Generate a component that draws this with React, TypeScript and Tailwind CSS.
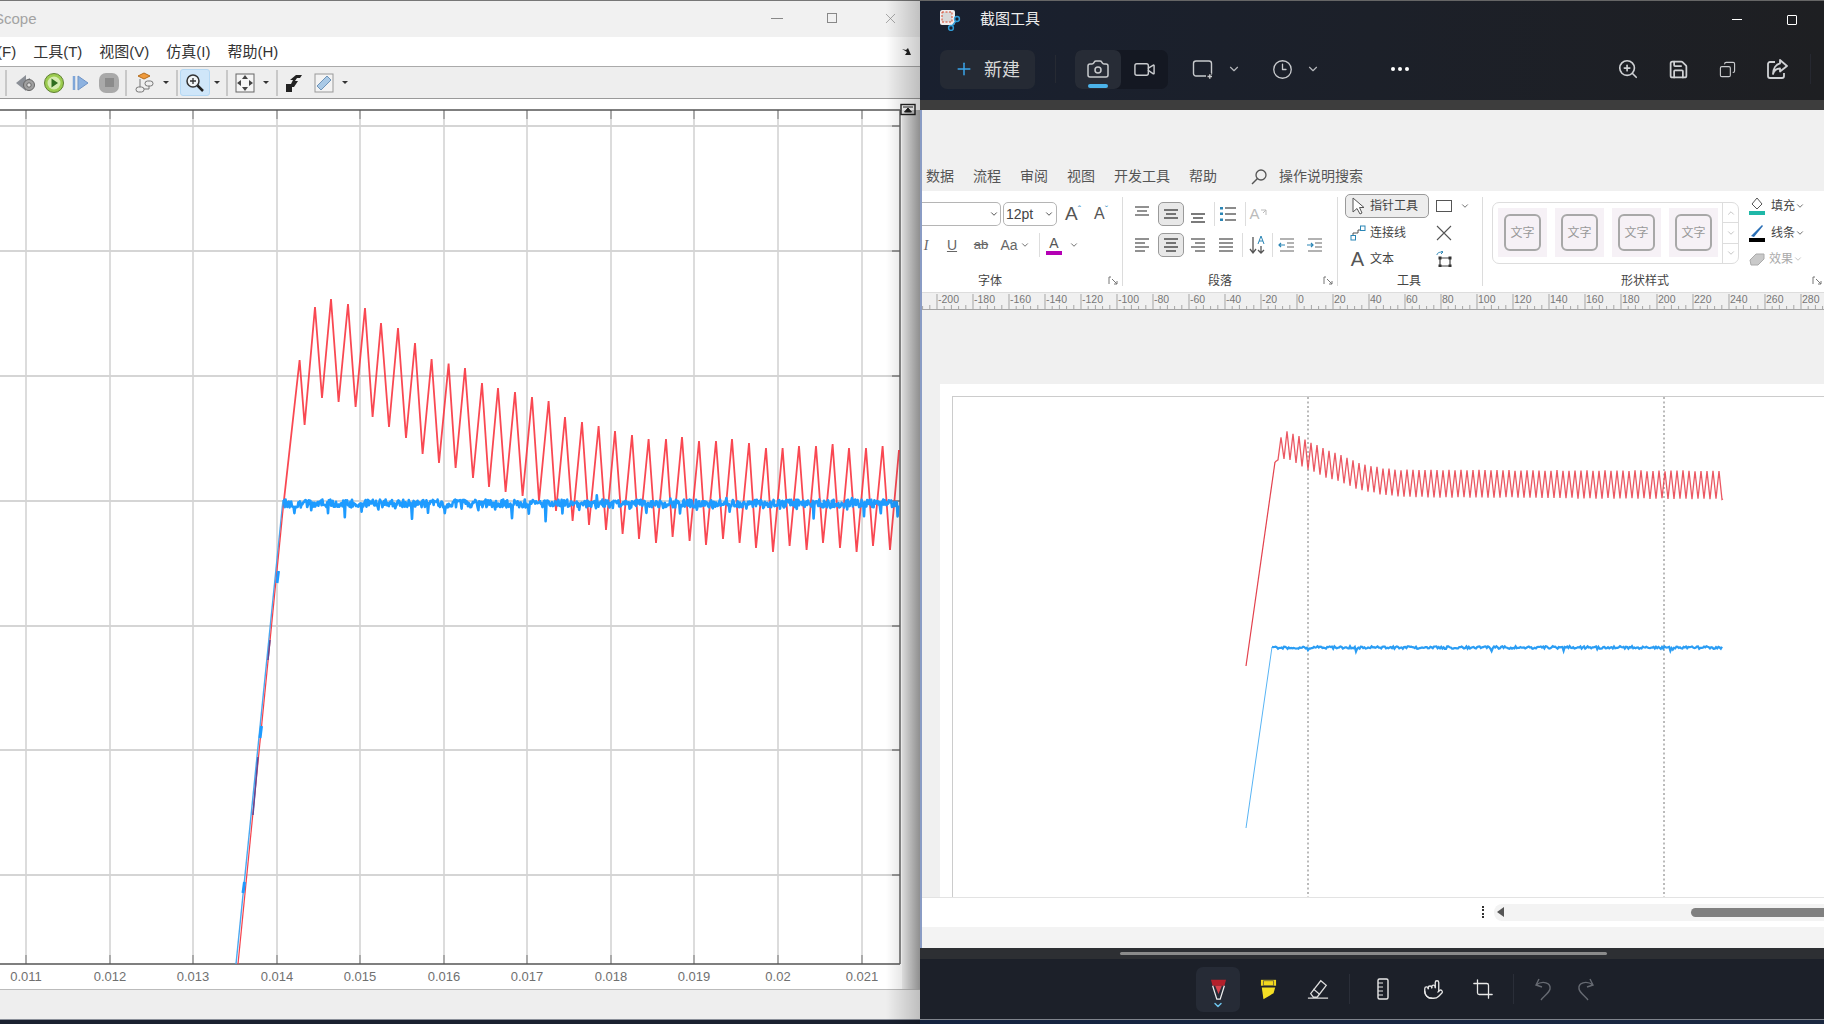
import type { ReactNode } from 'react';
import { Camera, ChevronDown, Clock3, Copy, Crop, Plus, Pointer, Save, Search, Video, X, ZoomIn } from 'lucide-react';

// traces, page coordinates
const redPeaks = [
  [284, 500], [299.6, 360], [304.6, 425], [315, 307], [322, 398], [331, 299], [338.6, 402], [348, 304], [355.6, 407],
  [365, 308], [372.6, 417], [381, 323], [389, 427], [398, 328], [406, 438], [415, 343], [422.6, 454], [431.6, 359], [439, 463],
  [448.6, 363.6], [455.6, 468], [465, 368], [473, 478], [482, 383], [489, 487], [498, 388], [505.6, 492], [515, 392], [522.6, 496],
  [532, 397], [539, 501], [548.6, 401], [556, 511], [565, 417], [572.6, 521], [582, 422], [589, 525], [598.6, 426], [606, 530],
  [615, 431], [622.6, 534], [632, 435], [639, 539], [648.6, 439], [656, 543], [666, 439], [672.6, 537], [682, 437], [689.6, 541],
  [699, 441], [706, 545], [716, 441], [723, 539], [732, 439], [739.6, 543], [749, 443], [756, 548], [766, 448], [773, 552],
  [782.6, 448], [789.6, 546], [799, 446], [806.6, 550], [816, 446], [823, 543], [832.6, 444], [840, 548], [849, 448], [856.6, 552],
  [866, 448], [873, 546], [882.6, 446], [890, 550], [899, 450],
];

let seed = 12345;
const rnd = () => {
  seed = (seed * 16807) % 2147483647;
  return seed / 2147483647;
};

function bluePlateau() {
  const pts = ['283,500'];
  let nextSpike = 294;
  for (let x = 284; x < 899; x += 0.8) {
    let y = 503.5 + (rnd() - 0.5) * 8;
    if (x >= nextSpike) {
      y = 505 + 3 + rnd() * rnd() * 16;
      nextSpike += 16.75;
    }
    if (rnd() > 0.993) y -= 7;
    pts.push(`${x.toFixed(1)},${y.toFixed(1)}`);
  }
  return pts.join(' ');
}

function interp(tbl: number[][], x: number) {
  for (let i = 1; i < tbl.length; i++) {
    if (x <= tbl[i][0]) {
      const [x0, y0] = tbl[i - 1];
      const [x1, y1] = tbl[i];
      return y0 + ((y1 - y0) * (x - x0)) / (x1 - x0);
    }
  }
  return tbl[tbl.length - 1][1];
}

const topEnv = [[1270, 450], [1287, 431], [1300, 437], [1320, 447], [1340, 455], [1360, 463], [1380, 468], [1400, 470], [1723, 471]];
const lowEnv = [[1270, 462], [1287, 458], [1300, 465], [1320, 475], [1340, 482], [1360, 490], [1380, 494], [1400, 497], [1723, 499]];

function smallRed() {
  const pts = ['1275,462'];
  for (let x = 1278; x < 1723; x += 3) {
    const up = Math.round((x - 1278) / 3) % 2 === 1;
    pts.push(`${x},${(interp(up ? topEnv : lowEnv, x) + (rnd() - 0.5)).toFixed(1)}`);
  }
  pts.push('1723,499');
  return pts.join(' ');
}

function smallBlue() {
  const pts: string[] = [];
  for (let x = 1272; x < 1723; x += 1.2) {
    let y = 647.5 + (rnd() - 0.5) * 2.6;
    if (rnd() > 0.97) y += 3;
    pts.push(`${x.toFixed(1)},${y.toFixed(1)}`);
  }
  return pts.join(' ');
}

const blueLine = bluePlateau();
const smallRedLine = smallRed();
const smallBlueLine = smallBlue();

const ticks = [26, 110, 193, 277, 360, 444, 527, 611, 694, 778, 862];
const tickLabels = ['0.011', '0.012', '0.013', '0.014', '0.015', '0.016', '0.017', '0.018', '0.019', '0.02', '0.021'];
const hLines = [126, 251, 376, 501, 626, 750, 875];
const rulerMarks = Array.from({ length: 26 }, (_, i) => -200 + i * 20 - 20);

function Slot({ className, children }: { className: string; children?: ReactNode }) {
  return <div className={`flex items-center justify-center shrink-0 ${className}`}>{children}</div>;
}

function Ico({ w = 22, h = 22, box, children }: { w?: number; h?: number; box?: string; children: ReactNode }) {
  return (
    <svg width={w} height={h} viewBox={box ?? `0 0 ${w} ${h}`} fill="none">
      {children}
    </svg>
  );
}

function Caret() {
  return <div className="w-0 h-0 border-x-[3px] border-x-transparent border-t-[3px] border-t-[#333]" />;
}

function ToolSep({ className }: { className: string }) {
  return <div className={`w-[2px] h-[26px] bg-[#c8c8c8] shrink-0 ${className}`} />;
}

function Lines({ rows, color = '#555' }: { rows: number[][]; color?: string }) {
  return (
    <Ico w={18} h={18}>
      {rows.map((r, i) => (
        <path key={i} d={`M${r[0]} ${r[2]}H${r[1]}`} stroke={color} strokeWidth="1.3" />
      ))}
    </Ico>
  );
}

function Launcher() {
  return (
    <Ico w={10} h={10}>
      <path d="M1 1V8M3 1H1M4 3L9 8M9 5V8H6" stroke="#777" strokeWidth="1" />
    </Ico>
  );
}

function Divider() {
  return <div className="w-px bg-[#dcdcdc] my-[6px] shrink-0" />;
}

function StyleTile() {
  return (
    <div className="w-[49px] h-[49px] bg-[#f6f1f6] flex items-center justify-center shrink-0">
      <div className="w-[37px] h-[37px] border-2 border-[#a8a8a8] rounded-[6px] flex items-center justify-center text-[12px] text-[#999]">文字</div>
    </div>
  );
}

function ScopeWindow() {
  return (
    <div className="relative w-[920px] h-full flex flex-col shrink-0 bg-white overflow-hidden">
      <div className="h-[37px] bg-[#f1f1f1] border-t border-[#777] flex items-center shrink-0">
        <span className="text-[15px] text-[#a3a3a3] -ml-[6px]">Scope</span>
        <div className="flex items-center -mt-[2px]">
          <Slot className="w-[20px] h-[20px] ml-[730px]"><div className="w-[12px] h-px bg-[#888]" /></Slot>
          <Slot className="w-[20px] h-[20px] ml-[35px]"><div className="w-[10px] h-[10px] border border-[#888]" /></Slot>
          <Slot className="w-[20px] h-[20px] ml-[39px]"><X size={17} strokeWidth={1} color="#888" /></Slot>
        </div>
      </div>
      <div className="h-[30px] bg-white border-b border-[#aaa] flex items-center gap-[17px] text-[15px] text-[#333] pt-[1px] shrink-0 -ml-[3px]">
        <span>(F)</span>
        <span>工具(T)</span>
        <span>视图(V)</span>
        <span>仿真(I)</span>
        <span>帮助(H)</span>
        <Slot className="w-[14px] h-[14px] ml-[605px]">
          <Ico w={10} h={8}><path d="M0 1L4 2L6 0L9 7H3L5 4Z" fill="#222" /></Ico>
        </Slot>
      </div>
      <div className="h-[32px] bg-[#eee] border-b border-[#999] flex items-center shrink-0">
        <ToolSep className="ml-[5px]" />
        <Slot className="w-[28px] h-[28px] ml-[5px]">
          <Ico w={22} h={22}>
            <path d="M1 11L11 3V8L15 6V16L11 14V19Z" fill="#8b8f96" />
            <circle cx="14" cy="13" r="5.5" fill="#a0a0a0" stroke="#666" />
            <circle cx="14" cy="13" r="2.2" fill="#ddd" stroke="#666" />
          </Ico>
        </Slot>
        <Slot className="w-[27px] h-[28px]">
          <Ico w={22} h={22}>
            <circle cx="11" cy="11" r="9.5" fill="#9ccc4f" stroke="#5f7f33" />
            <circle cx="11" cy="11" r="6.5" fill="#d6ecb0" />
            <path d="M8.5 6.5L15 11L8.5 15.5Z" fill="#2f6e1f" />
          </Ico>
        </Slot>
        <Slot className="w-[28px] h-[28px]">
          <Ico w={18} h={18}>
            <path d="M2 2V16" stroke="#7fa6d8" strokeWidth="2.5" />
            <path d="M6 2L16 9L6 16Z" fill="#8db2e0" stroke="#6e93c6" />
          </Ico>
        </Slot>
        <Slot className="w-[28px] h-[28px]">
          <div className="w-[20px] h-[20px] rounded-[7px] bg-[#a9a9a9] flex items-center justify-center">
            <div className="w-[9px] h-[9px] bg-[#8b8b8b]" />
          </div>
        </Slot>
        <ToolSep className="ml-[2px]" />
        <Slot className="w-[26px] h-[28px] ml-[5px]">
          <Ico w={20} h={22}>
            <path d="M3 4L9 1L15 4L9 7Z" fill="#ef9a3c" stroke="#b56d1c" />
            <rect x="10" y="9" width="8" height="5" rx="2.5" fill="#eee" stroke="#777" />
            <rect x="1" y="15" width="8" height="5" rx="2.5" fill="#eee" stroke="#777" />
            <path d="M5 7V15M14 14V17H9" stroke="#777" />
          </Ico>
        </Slot>
        <Slot className="w-[16px] h-[28px]"><Caret /></Slot>
        <ToolSep className="ml-[2px]" />
        <Slot className="w-[30px] h-[27px] ml-[2px] bg-[#cfe6f9] border border-[#b5d8f3] rounded-[3px]">
          <Ico w={20} h={20}>
            <circle cx="8" cy="8" r="6" fill="#f2f6f8" stroke="#333" strokeWidth="1.5" />
            <path d="M5 8H11M8 5V11" stroke="#333" strokeWidth="1.3" />
            <path d="M12.5 12.5L18 18" stroke="#222" strokeWidth="2.5" />
          </Ico>
        </Slot>
        <Slot className="w-[13px] h-[28px]"><Caret /></Slot>
        <ToolSep className="ml-[3px]" />
        <Slot className="w-[26px] h-[28px] ml-[4px]">
          <Ico w={20} h={20}>
            <rect x="1" y="1" width="18" height="18" fill="#f5f5f5" stroke="#666" />
            <path d="M10 2L7 6H13ZM10 18L7 14H13ZM2 10L6 7V13ZM18 10L14 7V13Z" fill="#444" />
          </Ico>
        </Slot>
        <Slot className="w-[16px] h-[28px]"><Caret /></Slot>
        <ToolSep className="ml-[2px]" />
        <Slot className="w-[26px] h-[28px] ml-[3px]">
          <Ico w={18} h={20}>
            <path d="M1 19V11H6L8 7H5L11 2H17L15 5H12L10 8H13L9 14H7V19Z" fill="#222" />
          </Ico>
        </Slot>
        <Slot className="w-[26px] h-[28px] ml-[4px]">
          <Ico w={20} h={20}>
            <rect x="1" y="1" width="18" height="18" fill="#f3f3f3" stroke="#999" />
            <path d="M3 13L13 3L17 7L7 17Z" fill="#a9c9e6" stroke="#6f94b8" />
          </Ico>
        </Slot>
        <Slot className="w-[16px] h-[28px]"><Caret /></Slot>
      </div>
      <svg className="flex-1 min-h-0 block" viewBox="0 99 920 890" width="920" height="890" fill="none">
        {hLines.map(y => <path key={y} d={`M0 ${y}H900`} stroke="#ababab" />)}
        {ticks.map(x => (
          <g key={x}>
            <path d={`M${x} 110V964`} stroke="#d4d4d4" strokeWidth="1.6" />
            <path d={`M${x} 110V119M${x} 955V964`} stroke="#8a8a8a" strokeWidth="1.2" />
          </g>
        ))}
        {hLines.map(y => <path key={y} d={`M892 ${y}H900`} stroke="#555" />)}
        <path d="M0 110H900M0 964H900" stroke="#555" strokeWidth="1.3" />
        <path d="M900 110V964" stroke="#666" strokeWidth="1.5" />
        <path d="M236 964L283 500" stroke="#4aa8f0" strokeWidth="1.4" />
        <path d="M238 964L284 500" stroke="#f5414b" strokeWidth="1.2" />
        <path d="M253 815L258 757M268 660L270 640" stroke="#5a4a9a" strokeWidth="1.5" />
        <path d="M243 893L244.5 882M260 738L261.5 726M277 583L278.5 571" stroke="#1e9bff" strokeWidth="3" />
        <polyline points={redPeaks.map(p => p.join(',')).join(' ')} stroke="#f8343f" strokeWidth="1.8" strokeLinejoin="miter" opacity="0.9" />
        <polyline points={blueLine} stroke="#1e9bff" strokeWidth="2.6" strokeLinejoin="round" />
        <rect x="901" y="104.5" width="14" height="10" fill="#fff" stroke="#222" strokeWidth="1.4" />
        <path d="M903 107H913M908 108L904.5 112H911.5Z" stroke="#222" fill="#222" />
        {ticks.map((x, i) => (
          <text key={x} x={x} y="981" textAnchor="middle" fontSize="13" fill="#707070" fontFamily="Liberation Sans">{tickLabels[i]}</text>
        ))}
      </svg>
      <div className="h-[30px] bg-[#eee] border-t border-[#bbb] shrink-0" />
      <div className="h-[5px] bg-[#1a2130] border-t border-[#8a8f99] shrink-0" />
      <div className="absolute right-0 top-0 bottom-0 w-[34px] bg-linear-to-r from-transparent to-black/20 pointer-events-none" />
      <div className="absolute right-0 top-[110px] bottom-[35px] w-[18px] bg-linear-to-r from-black/5 to-black/30 pointer-events-none" />
    </div>
  );
}

function Ribbon() {
  return (
    <div className="h-[101px] bg-white flex text-[12px] text-[#444] shrink-0">
      {/* font */}
      <div className="w-[200px] pt-[11px] shrink-0">
        <div className="flex h-[24px]">
          <div className="w-[79px] border border-l-0 border-[#b5b5b5] rounded-r-[5px] flex items-center justify-end pr-[1px]">
            <ChevronDown size={10} color="#333" strokeWidth={2} />
          </div>
          <div className="w-[54px] ml-[2px] border border-[#b5b5b5] rounded-[5px] flex items-center justify-between px-[2px] text-[14px] text-[#444]">
            <span>12pt</span>
            <ChevronDown size={10} color="#333" strokeWidth={2} />
          </div>
          <Slot className="w-[22px] ml-[5px]"><span className="text-[19px] text-[#555]">A</span><span className="text-[10px] text-[#3a8fc4] -mt-[8px]">ˆ</span></Slot>
          <Slot className="w-[24px] ml-[5px]"><span className="text-[16px] text-[#555]">A</span><span className="text-[10px] text-[#3a8fc4] -mt-[8px]">ˇ</span></Slot>
        </div>
        <div className="flex h-[24px] mt-[7px] items-center text-[#666]">
          <Slot className="w-[8px]"><span className="italic text-[14px] [font-family:'Liberation_Serif',serif]">I</span></Slot>
          <Slot className="w-[20px] ml-[12px]"><span className="underline text-[14px]">U</span></Slot>
          <Slot className="w-[20px] ml-[9px]"><span className="line-through text-[13px]">ab</span></Slot>
          <Slot className="w-[22px] ml-[7px]"><span className="text-[14px]">Aa</span></Slot>
          <Slot className="w-[10px]"><ChevronDown size={10} color="#555" /></Slot>
          <div className="w-px h-[24px] bg-[#ddd] ml-[9px]" />
          <Slot className="w-[20px] ml-[4px] flex-col">
            <span className="text-[14px] leading-[15px] text-[#555]">A</span>
            <div className="w-[16px] h-[4px] bg-[#b400b4]" />
          </Slot>
          <Slot className="w-[10px] ml-[5px]"><ChevronDown size={10} color="#555" /></Slot>
        </div>
        <div className="flex h-[18px] mt-[15px] items-center">
          <div className="w-[136px] text-center">字体</div>
          <Slot className="w-[10px] ml-[50px]"><Launcher /></Slot>
        </div>
      </div>
      <Divider />
      {/* paragraph */}
      <div className="w-[214px] pt-[11px] shrink-0">
        <div className="flex h-[24px] items-center">
          <Slot className="w-[24px] ml-[7px]"><Lines rows={[[2, 16, 2], [4, 14, 6], [2, 16, 10]]} /></Slot>
          <Slot className="w-[26px] h-[24px] ml-[4px] bg-[#e8e8e8] border border-[#9a9a9a] rounded-[5px]"><Lines rows={[[2, 16, 5], [4, 14, 9], [2, 16, 13]]} color="#333" /></Slot>
          <Slot className="w-[24px] ml-[2px]"><Lines rows={[[2, 16, 9], [4, 14, 13], [2, 16, 17]]} color="#333" /></Slot>
          <div className="w-px h-[24px] bg-[#ddd] ml-[4px]" />
          <Slot className="w-[20px] ml-[3px]">
            <Ico w={18} h={18}>
              <path d="M6 3H17M6 9H17M6 15H17" stroke="#666" strokeWidth="1.3" />
              <path d="M1 2H4V4.5H1ZM1 7.5H4V10H1ZM1 13.5H4V16H1Z" fill="#2a85b5" />
            </Ico>
          </Slot>
          <div className="w-px h-[24px] bg-[#ddd] ml-[7px]" />
          <Slot className="w-[20px] ml-[2px]">
            <span className="text-[15px] text-[#bbb]">A</span>
            <Ico w={7} h={12}><path d="M1 2H6V7M6 2L3 5" stroke="#bbb" /></Ico>
          </Slot>
        </div>
        <div className="flex h-[24px] mt-[7px] items-center">
          <Slot className="w-[24px] ml-[7px]"><Lines rows={[[2, 16, 3], [2, 12, 7], [2, 16, 11], [2, 12, 15]]} /></Slot>
          <Slot className="w-[26px] h-[24px] ml-[4px] bg-[#e8e8e8] border border-[#9a9a9a] rounded-[5px]"><Lines rows={[[2, 16, 3], [4, 14, 7], [2, 16, 11], [4, 14, 15]]} color="#333" /></Slot>
          <Slot className="w-[24px] ml-[2px]"><Lines rows={[[2, 16, 3], [6, 16, 7], [2, 16, 11], [6, 16, 15]]} /></Slot>
          <Slot className="w-[24px] ml-[4px]"><Lines rows={[[2, 16, 3], [2, 16, 7], [2, 16, 11], [2, 16, 15]]} /></Slot>
          <div className="w-px h-[24px] bg-[#ddd] ml-[4px]" />
          <Slot className="w-[20px] ml-[4px]">
            <Ico w={18} h={20}>
              <path d="M5 2V17M2 14L5 18L8 14M13 11V17M10 15L13 18L16 15" stroke="#555" strokeWidth="1.3" />
              <path d="M10 9L13 1L16 9M11 6H15" stroke="#2a85b5" />
            </Ico>
          </Slot>
          <div className="w-px h-[24px] bg-[#ddd] ml-[5px]" />
          <Slot className="w-[24px] ml-[2px]">
            <Ico w={18} h={18}>
              <path d="M2 3H16M9 7H16M9 11H16M2 15H16" stroke="#666" strokeWidth="1.2" />
              <path d="M7 9H1M3 7L1 9L3 11" stroke="#2a85b5" strokeWidth="1.2" />
            </Ico>
          </Slot>
          <Slot className="w-[24px] ml-[4px]">
            <Ico w={18} h={18}>
              <path d="M2 3H16M9 7H16M9 11H16M2 15H16" stroke="#666" strokeWidth="1.2" />
              <path d="M1 9H7M5 7L7 9L5 11" stroke="#2a85b5" strokeWidth="1.2" />
            </Ico>
          </Slot>
        </div>
        <div className="flex h-[18px] mt-[15px] items-center">
          <div className="w-[194px] text-center">段落</div>
          <Slot className="w-[10px] ml-[6px]"><Launcher /></Slot>
        </div>
      </div>
      <Divider />
      {/* tools */}
      <div className="w-[144px] pt-[3px] shrink-0">
        <div className="flex h-[24px] items-center">
          <div className="w-[84px] h-[24px] ml-[7px] bg-[#ededed] border border-[#9a9a9a] rounded-[5px] flex items-center">
            <Slot className="w-[24px]">
              <Ico w={14} h={18}><path d="M2 1V15L6 11.5L9 17L11 16L8.5 10.5H13Z" fill="#fff" stroke="#555" /></Ico>
            </Slot>
            <span>指针工具</span>
          </div>
          <Slot className="w-[16px] ml-[7px]"><div className="w-[16px] h-[12px] border border-[#555]" /></Slot>
          <Slot className="w-[10px] ml-[8px]"><ChevronDown size={10} color="#555" /></Slot>
        </div>
        <div className="flex h-[24px] mt-[3px] items-center">
          <div className="w-[84px] ml-[7px] flex items-center">
            <Slot className="w-[25px]">
              <Ico w={16} h={16}>
                <path d="M3 11V8H8V5H11" stroke="#555" />
                <rect x="1" y="10.5" width="4.5" height="4.5" fill="#fff" stroke="#2a85b5" />
                <rect x="10.5" y="1" width="4.5" height="4.5" fill="#fff" stroke="#2a85b5" />
              </Ico>
            </Slot>
            <span>连接线</span>
          </div>
          <Slot className="w-[16px] ml-[7px]">
            <Ico w={16} h={16}><path d="M1 1L15 15M15 1L1 15" stroke="#555" strokeWidth="1.1" /></Ico>
          </Slot>
        </div>
        <div className="flex h-[24px] mt-[2px] items-center">
          <div className="w-[84px] ml-[7px] flex items-center">
            <Slot className="w-[25px]"><span className="text-[20px] text-[#555]">A</span></Slot>
            <span>文本</span>
          </div>
          <Slot className="w-[16px] ml-[7px]">
            <Ico w={16} h={16}>
              <path d="M4 7H14V15H4Z" stroke="#444" strokeWidth="1.2" />
              <path d="M2.5 5.5H5.5V8.5H2.5ZM12.5 5.5H15.5V8.5H12.5ZM2.5 13.5H5.5V16H2.5ZM12.5 13.5H15.5V16H12.5Z" fill="#333" />
              <path d="M1 4C1 2 3 1 7 1M5 0L7 1L5 3" stroke="#2a85b5" />
            </Ico>
          </Slot>
        </div>
        <div className="w-[142px] h-[18px] mt-[1px] flex items-center justify-center">工具</div>
      </div>
      <Divider />
      {/* shape styles */}
      <div className="flex-1 min-w-0">
        <div className="flex h-[81px]">
          <div className="w-[247px] h-[62px] ml-[9px] mt-[11px] border border-[#ddd] rounded-[7px] flex shrink-0 overflow-hidden">
            <div className="flex gap-[8px] pl-[5px] py-[5px]">
              <StyleTile />
              <StyleTile />
              <StyleTile />
              <StyleTile />
            </div>
            <div className="w-[16px] ml-auto border-l border-[#ddd] flex flex-col">
              <Slot className="flex-1 border-b border-[#ddd]"><ChevronDown size={10} color="#bbb" className="rotate-180" /></Slot>
              <Slot className="flex-1 border-b border-[#ddd]"><ChevronDown size={10} color="#bbb" /></Slot>
              <Slot className="flex-1"><ChevronDown size={10} color="#bbb" /></Slot>
            </div>
          </div>
          <div className="ml-[9px] pt-[2px] flex flex-col">
            <div className="h-[26px] flex items-center">
              <Slot className="w-[18px]">
                <Ico w={18} h={20}>
                  <path d="M9 2L14 8L9 13L4 8Z" fill="#fff" stroke="#555" />
                  <rect x="1" y="15" width="16" height="4" fill="#1fb8a8" />
                </Ico>
              </Slot>
              <span className="ml-[5px]">填充</span>
              <ChevronDown size={10} color="#555" />
            </div>
            <div className="h-[27px] flex items-center">
              <Slot className="w-[18px]">
                <Ico w={18} h={20}>
                  <path d="M3 13L14 2L15 3L6 14Z" fill="#2a6fb5" />
                  <rect x="1" y="15" width="16" height="4" fill="#000" />
                </Ico>
              </Slot>
              <span className="ml-[5px]">线条</span>
              <ChevronDown size={10} color="#555" />
            </div>
            <div className="h-[26px] flex items-center text-[#aaa]">
              <Slot className="w-[18px]">
                <Ico w={18} h={16}>
                  <path d="M2 9L8 3H16V8L10 14H3Z" fill="#c9c9c9" stroke="#aaa" />
                </Ico>
              </Slot>
              <span className="ml-[3px]">效果</span>
              <ChevronDown size={10} color="#bbb" />
            </div>
          </div>
        </div>
        <div className="flex h-[18px] items-center">
          <div className="w-[324px] text-center">形状样式</div>
          <Slot className="w-[10px] ml-[5px]"><Launcher /></Slot>
        </div>
      </div>
    </div>
  );
}

function SnipWindow() {
  return (
    <div className="flex-1 h-full min-w-0 flex flex-col bg-[#1c2029] overflow-hidden">
      <div className="h-[100px] border-t border-[#666] bg-linear-to-r from-[#19202f] via-[#1c2029] via-50% to-[#1e1f22] shrink-0">
        <div className="h-[37px] flex items-center">
          <Slot className="w-[24px] h-[24px] ml-[18px]">
            <Ico w={22} h={22}>
              <rect x="1" y="1" width="15" height="15" rx="2" fill="#f0eeee" />
              <rect x="3" y="3" width="10" height="10" fill="#d8d8d8" stroke="#d9472b" strokeDasharray="2 1.5" />
              <circle cx="18" cy="10" r="2.4" stroke="#2f9bd6" strokeWidth="1.5" />
              <circle cx="12" cy="19" r="2.4" stroke="#2f9bd6" strokeWidth="1.5" />
              <path d="M13 17L17 12" stroke="#2f9bd6" strokeWidth="1.5" />
            </Ico>
          </Slot>
          <span className="text-[15px] text-[#eee] ml-[18px]">截图工具</span>
          <Slot className="w-[14px] h-[14px] ml-[690px]"><div className="w-[10px] h-px bg-white" /></Slot>
          <Slot className="w-[14px] h-[14px] ml-[41px]"><div className="w-[10px] h-[10px] border border-white rounded-[1px]" /></Slot>
        </div>
        <div className="h-[62px] flex items-center">
          <div className="w-[95px] h-[39px] ml-[20px] bg-[#252a34] rounded-[7px] flex items-center shrink-0">
            <Slot className="w-[20px] ml-[14px]"><Plus size={24} strokeWidth={1.8} color="#3aa5ea" /></Slot>
            <span className="text-[18px] text-[#d8d8d8] ml-[10px] pt-[3px]">新建</span>
          </div>
          <div className="w-px h-[28px] bg-[#262a33] ml-[20px]" />
          <div className="w-[93px] h-[39px] ml-[19px] bg-[#141822] rounded-[7px] flex shrink-0">
            <div className="relative w-[46px] h-full bg-[#272c36] rounded-[7px] flex items-center justify-center">
              <Camera size={24} strokeWidth={1.5} color="#c8cacd" />
              <div className="absolute bottom-[1px] left-[13px] w-[20px] h-[3.5px] rounded-full bg-[#4bb3ea]" />
            </div>
            <Slot className="w-[47px]"><Video size={23} strokeWidth={1.5} color="#c8cacd" /></Slot>
          </div>
          <Slot className="w-[34px] h-[34px] ml-[18px]">
            <Ico w={22} h={20}>
              <rect x="1.5" y="2" width="18" height="15" rx="2.5" stroke="#c8cacd" strokeWidth="1.4" />
              <path d="M14 17.5H21M17.5 14V21" stroke="#1e2028" strokeWidth="3.5" />
              <path d="M15.5 17.5H20M17.8 15.2V19.8" stroke="#c8cacd" strokeWidth="1.4" />
            </Ico>
          </Slot>
          <Slot className="w-[20px] ml-[4px]"><ChevronDown size={14} color="#b5b7bb" /></Slot>
          <Slot className="w-[34px] h-[34px] ml-[21px]"><Clock3 size={21} strokeWidth={1.5} color="#c8cacd" /></Slot>
          <Slot className="w-[20px] ml-[4px]"><ChevronDown size={14} color="#b5b7bb" /></Slot>
          <Slot className="w-[30px] ml-[62px] gap-[3px]">
            <div className="w-[4px] h-[4px] rounded-full bg-white" />
            <div className="w-[4px] h-[4px] rounded-full bg-white" />
            <div className="w-[4px] h-[4px] rounded-full bg-white" />
          </Slot>
          <Slot className="w-[30px] ml-[198px]"><ZoomIn size={22} strokeWidth={1.8} color="#cfd1d4" /></Slot>
          <Slot className="w-[30px] ml-[20px]"><Save size={21} strokeWidth={2} color="#cfd1d4" /></Slot>
          <Slot className="w-[30px] ml-[19px]"><Copy size={17} strokeWidth={1.6} color="#c8cacd" className="-scale-x-100" /></Slot>
          <Slot className="w-[30px] ml-[20px]">
            <Ico w={22} h={22}>
              <path d="M9 4H4A2 2 0 0 0 2 6V18A2 2 0 0 0 4 20H16A2 2 0 0 0 18 18V15" stroke="#cfd1d4" strokeWidth="1.8" />
              <path d="M14 2L21 8L14 13.5V10.5C10 10.5 8 12.5 7 16C7 10.5 10 6 14 5.5Z" stroke="#cfd1d4" strokeWidth="1.8" strokeLinejoin="round" />
            </Ico>
          </Slot>
          <div className="w-px h-[30px] bg-[#262830] ml-[18px]" />
        </div>
      </div>
      <div className="h-[10px] bg-[#3d3d3d] shrink-0" />
      <div className="h-[838px] border-l-2 border-[#8a9cc4] bg-[#f0f0f0] flex flex-col shrink-0">
        <div className="h-[81px] flex items-end pb-[4px] pl-[4px] gap-[19px] text-[14px] text-[#555] shrink-0">
          <span>数据</span>
          <span>流程</span>
          <span>审阅</span>
          <span>视图</span>
          <span>开发工具</span>
          <span>帮助</span>
          <span className="flex items-center ml-[14px]">
            <Ico w={18} h={18}>
              <circle cx="11" cy="7" r="5" stroke="#555" strokeWidth="1.3" />
              <path d="M7.5 10.5L2 16" stroke="#555" strokeWidth="1.5" />
            </Ico>
            <span className="ml-[11px]">操作说明搜索</span>
          </span>
        </div>
        <Ribbon />
        <svg className="block shrink-0" width="902" height="18" viewBox="922 292 902 18" fill="none">
          <path d="M922 292.5H1824" stroke="#ddd" />
          <path d="M922 309.5H1824" stroke="#a5a5a5" />
          {rulerMarks.map(v => {
            const x = 1297 + 1.8 * v;
            return (
              <g key={v}>
                <path d={`M${x} 294V309M${x + 7.2} 306V309M${x + 14.4} 305V309M${x + 21.6} 306V309M${x + 28.8} 305V309`} stroke="#a5a5a5" />
                {v >= -200 && <text x={x + 1} y="303" fontSize="10.5" fill="#777" fontFamily="Liberation Sans">{v}</text>}
              </g>
            );
          })}
        </svg>
        <div className="h-[74px] shrink-0" />
        <div className="h-[513px] ml-[18px] bg-white pl-[12px] pt-[12px] shrink-0">
          <div className="h-full border-l border-t border-[#ccc]">
            <svg className="block" width="871" height="500" viewBox="953 397 871 500" fill="none">
              <path d="M1308 397V897M1664 397V897" stroke="#777" strokeDasharray="2 2.5" />
              <path d="M1246 828L1272 647" stroke="#58b4f4" strokeWidth="1" />
              <polyline points={smallBlueLine} stroke="#2a9df4" strokeWidth="2.2" />
              <path d="M1246 666L1275 462" stroke="#e3404c" strokeWidth="1.2" />
              <polyline points={smallRedLine} stroke="#e83a47" strokeWidth="1.3" opacity="0.85" />
            </svg>
          </div>
        </div>
        <div className="h-[30px] bg-white border-t border-[#e3e3e3] flex items-center pb-[1px] shrink-0">
          <div className="ml-[560px] w-[2px] h-[12px] border-l-2 border-dotted border-[#333]" />
          <div className="ml-[10px] flex-1 h-[17px] bg-[#f3f3f3] rounded-l-[8px] flex items-center">
            <div className="w-0 h-0 ml-[3px] border-y-[5px] border-y-transparent border-r-[7px] border-r-[#555]" />
            <div className="ml-auto w-[133px] h-[9px] bg-[#808080] rounded-l-full" />
          </div>
        </div>
        <div className="flex-1 bg-[#f3f3f3]" />
      </div>
      <div className="h-[11px] bg-[#2d2f33] pl-[200px] pt-[4px] shrink-0">
        <div className="w-[487px] h-[3px] rounded-full bg-[#8b8b8b]" />
      </div>
      <div className="h-[60px] flex items-center shrink-0">
        <div className="relative w-[44px] h-[45px] ml-[276px] bg-[#262b36] rounded-[7px] flex items-start justify-center pt-[12px] shrink-0">
          <Ico w={19} h={21} box="0 0 20 25">
            <path d="M1 1H19L17 8H3Z" fill="#b3202b" />
            <path d="M3 8L8 24H12L17 8" stroke="#eee" strokeWidth="1.5" />
            <path d="M6 8L10 18L14 8Z" fill="#d9434e" />
          </Ico>
          <div className="absolute bottom-[1px] left-[16px]">
            <ChevronDown size={12} strokeWidth={3} color="#6cc2ea" />
          </div>
        </div>
        <Slot className="w-[30px] ml-[13px]">
          <Ico w={19} h={21} box="0 0 20 25">
            <path d="M1 1H19V8H1Z" fill="#f2d81e" />
            <path d="M4 8H16V2H4Z" stroke="#444" strokeWidth="0.8" />
            <path d="M2 10H18L16 17L4 24Z" fill="#f4de24" />
          </Ico>
        </Slot>
        <Slot className="w-[30px] ml-[20px]">
          <Ico w={22} h={22} box="0 0 24 24">
            <path d="M4 17L15 3L21 8L11 21H7Z" stroke="#dcdcdc" strokeWidth="1.4" />
            <path d="M7 12L14 18M1 22H23" stroke="#dcdcdc" strokeWidth="1.2" />
          </Ico>
        </Slot>
        <div className="w-px h-[30px] bg-[#2a2e38] ml-[16px]" />
        <Slot className="w-[30px] ml-[18px]">
          <Ico w={14} h={24}>
            <rect x="2" y="2" width="10" height="20" rx="1.5" stroke="#e8e8e8" strokeWidth="1.4" />
            <path d="M2 6H7M2 10H7M2 14H7M2 18H7" stroke="#e8e8e8" />
          </Ico>
        </Slot>
        <Slot className="w-[30px] ml-[20px]"><Pointer size={21} strokeWidth={1.5} color="#e8e8e8" className="-scale-x-100" /></Slot>
        <Slot className="w-[30px] ml-[20px]"><Crop size={22} strokeWidth={1.4} color="#e8e8e8" /></Slot>
        <div className="w-px h-[30px] bg-[#2a2e38] ml-[15px]" />
        <Slot className="w-[30px] ml-[14px]">
          <Ico w={20} h={24}>
            <path d="M6 2L3 8L9 10M3 8C10 3 18 6 17 12C16 16 11 19 8 23" stroke="#666a72" strokeWidth="1.4" />
          </Ico>
        </Slot>
        <Slot className="w-[30px] ml-[13px]">
          <Ico w={20} h={24}>
            <path d="M14 2L17 8L11 10M17 8C10 3 2 6 3 12C4 16 9 19 12 23" stroke="#666a72" strokeWidth="1.4" />
          </Ico>
        </Slot>
      </div>
      <div className="h-[5px] bg-linear-to-r from-[#14233f] to-[#1a2740] border-t border-[#7f848c] shrink-0" />
    </div>
  );
}

export default function App() {
  return (
    <div className="w-[1824px] h-[1024px] flex overflow-hidden [font-family:'Liberation_Sans','Noto_Sans_CJK_SC',sans-serif]">
      <ScopeWindow />
      <SnipWindow />
    </div>
  );
}
